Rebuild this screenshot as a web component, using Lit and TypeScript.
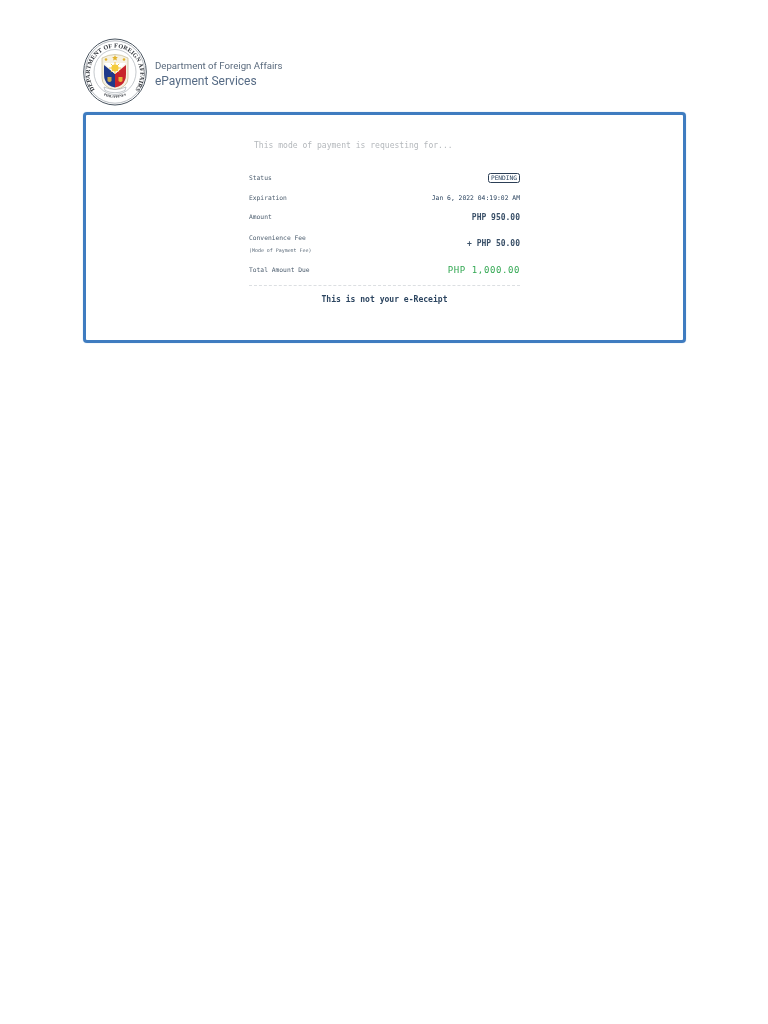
import { LitElement, html, css, svg } from "lit";
import { customElement } from "lit/decorators.js";

const seal = svg`<svg class="seal" viewBox="0 0 64 68" width="64" height="68" aria-hidden="true">
  <defs>
    <path id="top" d="M13.500 54 A25.200 26.400 0 1 1 50.500 54"/>
    <path id="bot" d="M19 56.500 A28 28 0 0 0 45 56.500"/>
  </defs>
  <ellipse cx="32" cy="34" rx="31.300" ry="33" fill="#fff" stroke="#4a5560" stroke-width="1"/>
  <ellipse cx="32" cy="34" rx="29.600" ry="31.200" fill="none" stroke="#8b929a" stroke-width=".6"/>
  <ellipse cx="32" cy="34" rx="21" ry="22.500" fill="none" stroke="#8b929a" stroke-width=".5"/>
  <text class="st"><textPath href="#top" startOffset="50%" text-anchor="middle">DEPARTMENT OF FOREIGN AFFAIRS</textPath></text>
  <text class="sb"><textPath href="#bot" startOffset="50%" text-anchor="middle">PHILIPPINES</textPath></text>
  <path d="M19 20 Q32 13 45 20 L45 40 Q45 49 32 52 Q19 49 19 40Z" fill="#f6f1e2" stroke="#b9ac7e" stroke-width=".6"/>
  <path d="M21 27 L32 36 V49.500 Q24 48 22 42 Q21 40 21 36Z" fill="#1f3a8a"/>
  <path d="M43 27 L32 36 V49.500 Q40 48 42 42 Q43 40 43 36Z" fill="#c8242c"/>
  <path d="M21 25 H43 L32 36Z" fill="#fff"/>
  <g stroke="#f2c230" stroke-width=".9">
    <path d="M32 24 V36 M26 30 H38 M27.800 25.800 L36.200 34.200 M36.200 25.800 L27.800 34.200"/>
  </g>
  <circle cx="32" cy="30" r="3.600" fill="#f5cc3c"/>
  <path d="M32 17l.9 1.900 2 .2-1.500 1.300.5 2-1.900-1-1.900 1 .5-2-1.500-1.300 2-.2z" fill="#e2b22a"/>
  <circle cx="23" cy="21.500" r="1.300" fill="#e2b22a"/><circle cx="41" cy="21.500" r="1.300" fill="#e2b22a"/>
  <path d="M24.500 39h4v4q-2 2-4 0z" fill="#c9a94a"/>
  <path d="M35.500 39h4v4q-2 2-4 0z" fill="#e8b63a"/>
  <path d="M21 49 Q32 54 43 49 L42 52.500 Q32 57 22 52.500Z" fill="#fff" stroke="#8b929a" stroke-width=".5"/>
</svg>`;

@customElement("app-root")
export class AppRoot extends LitElement {
  static styles = css`
    :host { display: block; width: 768px; height: 1024px; background: #fff; overflow: hidden; box-sizing: border-box; padding: 38px 82px 0 83px; color: #2c4560; font-family: "DejaVu Sans Mono", monospace; filter: blur(.35px); }
    .head { display: flex; align-items: center; gap: 8px; height: 68px; margin-bottom: 6px; }
    .seal { flex: none; }
    .seal text { font-family: "Liberation Serif", serif; fill: #2e3238; font-weight: 700; }
    .st { font-size: 6.200px; letter-spacing: .1px; }
    .sb { font-size: 3.600px; }
    .titles { font-family: Roboto, sans-serif; color: #5b6b7e; display: flex; flex-direction: column; padding-top: 3px; }
    .t1 { font-size: 9.650px; line-height: 14px; }
    .t2 { font-size: 12px; line-height: 16px; color: #566b85; }
    .card { box-sizing: border-box; height: 231px; border: 3px solid #3f7cc0; border-radius: 4px; padding: 24px 163px 0 163px; box-shadow: 0 0 1px #8fb3dc; }
    .req { font-size: 8.050px; line-height: 14px; color: #b4b8bc; padding-left: 5px; margin-bottom: 15px; }
    .row { display: flex; justify-content: space-between; align-items: center; font-size: 6.300px; color: #4c5d6e; }
    .name { margin-bottom: 1px; }
    .r1 { height: 20px; }
    .r2 { height: 19px; }
    .r3 { height: 20px; }
    .r4 { height: 32px; }
    .r5 { height: 22px; }
    .badge { box-sizing: border-box; border: 1px solid #2c3f56; border-radius: 2.500px; font-size: 6.200px; line-height: 8.500px; height: 10.500px; padding: 0 2px; color: #2c4560; }
    .date { font-size: 6.380px; color: #2c4560; }
    .amt { font-size: 8px; font-weight: 700; color: #3a5068; }
    .lab { display: flex; flex-direction: column; gap: 6px; }
    .sub { font-size: 4.950px; color: #5c6b7a; }
    .total { font-size: 9px; letter-spacing: .6px; color: #33a853; margin-bottom: 1px; }
    .dash { border-top: 1px dashed #dcdfe2; margin-top: 4px; }
    .note { text-align: center; font-size: 8.050px; font-weight: 700; color: #2c4560; line-height: 12px; margin-top: 8px; }
  `;

  render() {
    return html`
      <div class="head">
        ${seal}
        <div class="titles">
          <div class="t1">Department of Foreign Affairs</div>
          <div class="t2">ePayment Services</div>
        </div>
      </div>
      <div class="card">
        <div class="req">This mode of payment is requesting for...</div>
        <div class="row r1"><span class="name">Status</span><span class="badge">PENDING</span></div>
        <div class="row r2"><span class="name">Expiration</span><span class="date">Jan 6, 2022 04:19:02 AM</span></div>
        <div class="row r3"><span class="name">Amount</span><span class="amt">PHP 950.00</span></div>
        <div class="row r4"><span class="lab"><span>Convenience Fee</span><span class="sub">(Mode of Payment Fee)</span></span><span class="amt">+ PHP 50.00</span></div>
        <div class="row r5"><span class="name">Total Amount Due</span><span class="total">PHP 1,000.00</span></div>
        <div class="dash"></div>
        <div class="note">This is not your e-Receipt</div>
      </div>
    `;
  }
}
